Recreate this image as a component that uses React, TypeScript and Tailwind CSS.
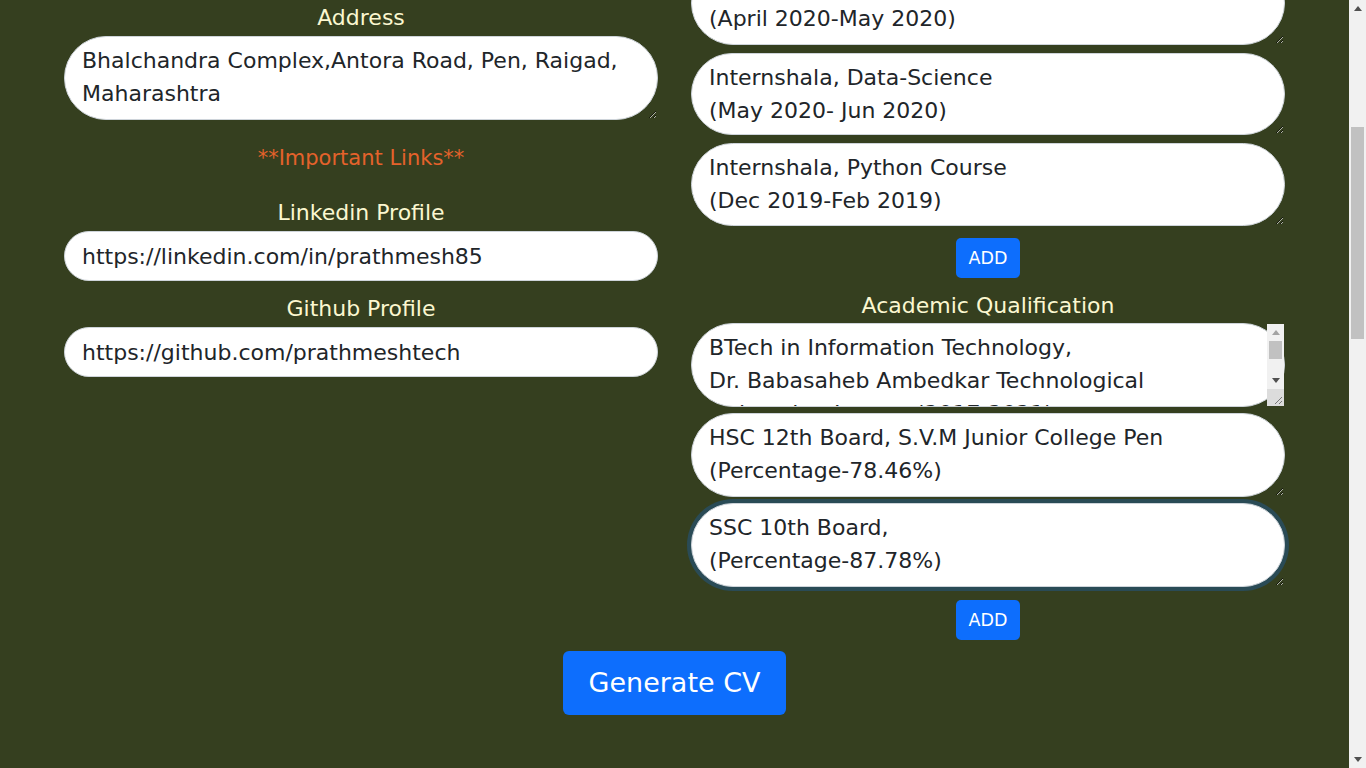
import { useLayoutEffect, useRef } from "react";

const font = "font-['DejaVu_Sans','Noto_Sans',sans-serif]";

const fieldBase =
  "block w-full border border-[#ced4da] bg-white px-[17px] text-[22px] leading-[33px] text-[#212529] outline-none";

function Label({ children, className = "" }: { children: React.ReactNode; className?: string }) {
  return (
    <div className={`h-[30px] text-center text-[22px] leading-[30px] text-[#fbf7d0] ${className}`}>
      {children}
    </div>
  );
}

function Area({
  value,
  className = "",
  heightClass = "h-[84px]",
  focused = false,
}: {
  value: string;
  className?: string;
  heightClass?: string;
  focused?: boolean;
}) {
  return (
    <textarea
      defaultValue={value}
      rows={2}
      className={`${fieldBase} ${heightClass} resize-y rounded-[50px] py-[7px] ${
        focused ? "border-[#86b7fe] shadow-[0_0_0_4px_rgba(13,110,253,0.25)]" : ""
      } ${className}`}
    />
  );
}

function Field({ value, className = "" }: { value: string; className?: string }) {
  return (
    <input
      type="text"
      defaultValue={value}
      className={`${fieldBase} h-[50px] rounded-full ${className}`}
    />
  );
}

function AddButton({ className = "" }: { className?: string }) {
  return (
    <div className={`flex justify-center ${className}`}>
      <button
        type="button"
        className="h-[40px] w-[64px] rounded-[5px] bg-[#0d6efd] text-[17.5px] text-white"
      >
        ADD
      </button>
    </div>
  );
}

function Arrow({ up, color }: { up: boolean; color: string }) {
  return (
    <svg width="8" height="5" viewBox="0 0 8 5">
      <polygon points={up ? "0,5 8,5 4,0" : "0,0 8,0 4,5"} fill={color} />
    </svg>
  );
}

// scrollbar painted inside the overflowing qualification box
function BoxScrollbar() {
  return (
    <div className="pointer-events-none absolute right-[1px] top-[1px] bottom-[1px] flex w-[17px] flex-col bg-[#f1f1f1]">
      <div className="flex h-[17px] items-center justify-center">
        <Arrow up color="#a3a3a3" />
      </div>
      <div className="flex-1 px-[2px]">
        <div className="h-[18px] bg-[#c1c1c1]" />
      </div>
      <div className="flex h-[17px] items-center justify-center">
        <Arrow up={false} color="#505050" />
      </div>
      <div className="relative h-[17px] bg-[#dcdcdc]">
        <svg className="absolute right-[2px] bottom-[2px]" width="8" height="8" viewBox="0 0 8 8">
          <line x1="1" y1="8" x2="8" y2="1" stroke="#777" strokeWidth="1" />
          <line x1="5" y1="8" x2="8" y2="5" stroke="#777" strokeWidth="1" />
        </svg>
      </div>
    </div>
  );
}

// page scrollbar (the browser hides its own)
function PageScrollbar() {
  return (
    <div className="pointer-events-none fixed right-0 top-0 flex h-screen w-[17px] flex-col bg-[#f1f1f1]">
      <div className="flex h-[17px] items-center justify-center pl-[1px]">
        <Arrow up color="#505050" />
      </div>
      <div className="flex-1 pl-[2px] pr-[2px] pt-[110px]">
        <div className="h-[212px] bg-[#c1c1c1]" />
      </div>
      <div className="flex h-[17px] items-center justify-center pl-[1px]">
        <Arrow up={false} color="#505050" />
      </div>
    </div>
  );
}

export default function App() {
  const scroller = useRef<HTMLDivElement>(null);

  useLayoutEffect(() => {
    if (scroller.current) scroller.current.scrollTop = 398;
  }, []);

  return (
    <div ref={scroller} className={`h-screen overflow-y-scroll bg-[#353f1f] ${font}`}>
      <div className="flex h-[196px] items-center justify-center">
        <h1 className="text-[34px] text-[#fbf7d0]">Resume Generator</h1>
      </div>

      <div className="ml-[64px] w-[1221px]">
        <div className="grid grid-cols-2 gap-[33px]">
          {/* left column */}
          <div>
            <Label>Full Name</Label>
            <Field value="Prathmesh Patil" className="mt-[3px]" />
            <Label className="mt-[13px]">Email</Label>
            <Field value="prathmesh85@gmail.com" className="mt-[3px]" />

            <Label className="mt-[26px]">Address</Label>
            <Area
              value={"Bhalchandra Complex,Antora Road, Pen, Raigad, Maharashtra"}
              className="mt-[3px]"
            />

            <div className="mt-[23px] h-[30px] text-center text-[21px] leading-[30px] text-[#e4622b]">
              **Important Links**
            </div>

            <Label className="mt-[25px]">Linkedin Profile</Label>
            <Field value="https://linkedin.com/in/prathmesh85" className="mt-[3px]" />
            <Label className="mt-[13px]">Github Profile</Label>
            <Field value="https://github.com/prathmeshtech" className="mt-[3px]" />
          </div>

          {/* right column */}
          <div>
            <Label>Career Objective</Label>
            <Area
              value={"To work in a challenging environment and grow with the organisation."}
              className="mt-[3px]"
            />
            <Label className="mt-[13px]">Work Experience</Label>
            <Area
              value={"Internshala, Web Development Training\n(April 2020-May 2020)"}
              className="mt-[3px]"
            />
            <Area
              value={"Internshala, Data-Science\n(May 2020- Jun 2020)"}
              heightClass="h-[82px]"
              className="mt-[8px]"
            />
            <Area
              value={"Internshala, Python Course\n(Dec 2019-Feb 2019)"}
              heightClass="h-[83px]"
              className="mt-[8px]"
            />
            <AddButton className="mt-[12px]" />

            <Label className="mt-[13px]">Academic Qualification</Label>
            <div className="relative mt-[2px]">
              <Area
                value={
                  "BTech in Information Technology,\nDr. Babasaheb Ambedkar Technological\nUniversity, Lonere (2017-2021)\n(CGPA-8.57)"
                }
                className="overflow-hidden"
              />
              <BoxScrollbar />
            </div>
            <Area
              value={"HSC 12th Board, S.V.M Junior College Pen\n(Percentage-78.46%)"}
              className="mt-[6px]"
            />
            <Area
              value={"SSC 10th Board,\n(Percentage-87.78%)"}
              className="mt-[6px]"
              focused
            />
            <AddButton className="mt-[13px]" />
          </div>
        </div>

        <div className="mt-[11px] flex justify-center">
          <button
            type="button"
            className="h-[64px] w-[223px] rounded-[6px] bg-[#0d6efd] text-[27px] text-white"
          >
            Generate CV
          </button>
        </div>
      </div>

      <div className="h-[1546px]" />
      <PageScrollbar />
    </div>
  );
}
